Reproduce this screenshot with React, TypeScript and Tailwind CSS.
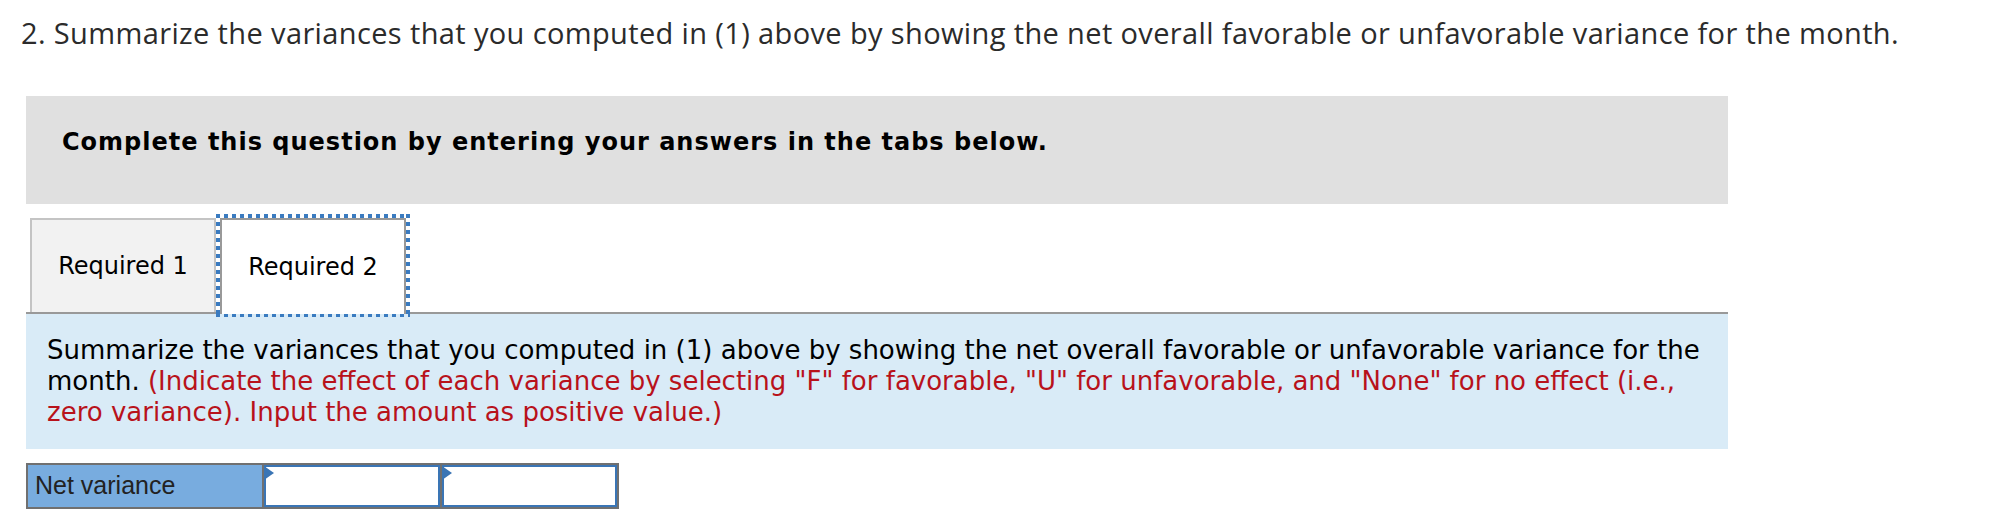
import React from "react";

const dotted =
  "[background:repeating-linear-gradient(90deg,#3a7bc0_0_4px,transparent_4px_8px)_top/100%_4px_no-repeat,repeating-linear-gradient(90deg,#3a7bc0_0_4px,transparent_4px_8px)_bottom/100%_3px_no-repeat,repeating-linear-gradient(180deg,#3a7bc0_0_4px,transparent_4px_8px)_left/4px_100%_no-repeat,repeating-linear-gradient(180deg,#3a7bc0_0_4px,transparent_4px_8px)_right/4px_100%_no-repeat]";

function Flag() {
  return (
    <div className="-ml-[2px] -mt-[1px] w-0 h-0 border-y-[7px] border-y-transparent border-l-[10px] border-l-[#3a75b5]" />
  );
}

export default function App() {
  return (
    <div className="w-[2010px] h-[530px] bg-white overflow-hidden font-['DejaVu_Sans',Verdana,sans-serif]">
      <div className="pt-[15px] pl-[21px] text-[29px] leading-[36px] tracking-[0.37px] text-[#2b2b2b] font-['Open_Sans',sans-serif]">
        2. Summarize the variances that you computed in (1) above by showing the net overall favorable or unfavorable variance for the month.
      </div>
      <div className="ml-[26px] w-[1702px] mt-[45px]">
        <div className="h-[108px] bg-[#e0e0e0] pl-[36px] pt-[31px]">
          <span className="font-bold text-[24px] leading-[30px] tracking-[1px] text-black">
            Complete this question by entering your answers in the tabs below.
          </span>
        </div>
        <div className="mt-[14px] ml-[4px] flex items-end gap-[4px] relative z-10 -mb-[2px]">
          <div className="w-[186px] h-[94px] mb-[2px] bg-[#f2f2f2] border-2 border-b-0 border-[#c4c4c4] flex items-center justify-center text-[24px] text-black">
            Required 1
          </div>
          <div className="relative w-[186px] h-[96px] bg-white border-2 border-b-0 border-[#999999] flex items-center justify-center text-[24px] text-black">
            Required 2
            <div className={"pointer-events-none absolute -inset-x-[6px] -top-[6px] -bottom-[3px] " + dotted} />
          </div>
        </div>
        <div className="border-t-2 border-[#999999] bg-[#d9ebf7] pl-[21px] pr-[20px] pt-[21px] pb-[21px] text-[26px] leading-[31px] text-black">
          Summarize the variances that you computed in (1) above by showing the net overall favorable or unfavorable variance for the month.{" "}
          <span className="text-[#b8121b]">
            (Indicate the effect of each variance by selecting "F" for favorable, "U" for unfavorable, and "None" for no effect (i.e., zero variance). Input the amount as positive value.)
          </span>
        </div>
        <div className="mt-[14px] w-[593px] h-[46px] border-2 border-[#707070] bg-[#707070] flex gap-[2px]">
          <div className="w-[234px] bg-[#78acdf] flex items-center pl-[7px] font-['Liberation_Sans',Arial,sans-serif] text-[25px] text-[#222222]">
            Net variance
          </div>
          <div className="w-[176px] bg-white border-2 border-[#3a75b5] flex items-start">
            <Flag />
          </div>
          <div className="w-[175px] bg-white border-2 border-[#3a75b5] flex items-start">
            <Flag />
          </div>
        </div>
      </div>
    </div>
  );
}
